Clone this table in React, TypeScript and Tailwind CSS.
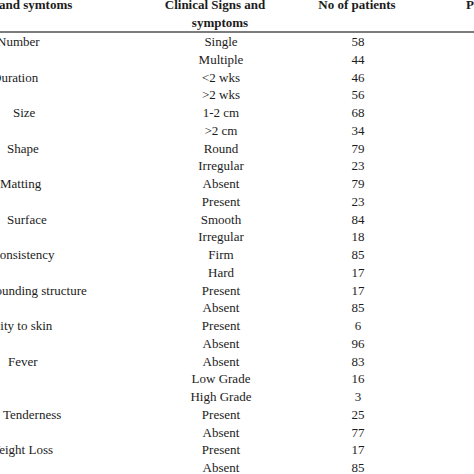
import React from "react";

type Row = { label?: string; off?: string; sign: string; n: string };

const rows: Row[] = [
  { label: "Number", off: "-ml-[3px]", sign: "Single", n: "58" },
  { sign: "Multiple", n: "44" },
  { label: "Duration", off: "-ml-[8px]", sign: "<2 wks", n: "46" },
  { sign: ">2 wks", n: "56" },
  { label: "Size", off: "ml-[13px]", sign: "1-2 cm", n: "68" },
  { sign: ">2 cm", n: "34" },
  { label: "Shape", off: "ml-[7px]", sign: "Round", n: "79" },
  { sign: "Irregular", n: "23" },
  { label: "Matting", off: "ml-[0px]", sign: "Absent", n: "79" },
  { sign: "Present", n: "23" },
  { label: "Surface", off: "ml-[7px]", sign: "Smooth", n: "84" },
  { sign: "Irregular", n: "18" },
  { label: "Consistency", off: "-ml-[9px]", sign: "Firm", n: "85" },
  { sign: "Hard", n: "17" },
  { label: "Surrounding structure", off: "-ml-[27px]", sign: "Present", n: "17" },
  { sign: "Absent", n: "85" },
  { label: "Fixity to skin", off: "-ml-[17px]", sign: "Present", n: "6" },
  { sign: "Absent", n: "96" },
  { label: "Fever", off: "ml-[8px]", sign: "Absent", n: "83" },
  { sign: "Low Grade", n: "16" },
  { sign: "High Grade", n: "3" },
  { label: "Tenderness", off: "ml-[3px]", sign: "Present", n: "25" },
  { sign: "Absent", n: "77" },
  { label: "Weight Loss", off: "-ml-[12px]", sign: "Present", n: "17" },
  { sign: "Absent", n: "85" },
];

export default function App() {
  return (
    <div
      className="w-[474px] h-[474px] overflow-hidden bg-white text-[#1c1c1c] text-[13px]"
      style={{ fontFamily: '"Liberation Serif", "Times New Roman", serif' }}
    >
      <div className="-mt-[4px] flex flex-col">
        {/* header */}
        <div className="flex font-bold leading-[17.5px]">
          <div className="w-[150px] shrink-0 whitespace-nowrap -ml-[1px]">and symtoms</div>
          <div className="w-[142px] shrink-0 flex flex-col items-center">
            <span className="whitespace-nowrap pr-[10px]">Clinical Signs and</span>
            <span className="whitespace-nowrap">symptoms</span>
          </div>
          <div className="w-[132px] shrink-0 text-center whitespace-nowrap">No of patients</div>
          <div className="pl-[43px] whitespace-nowrap">P value</div>
        </div>
        <div className="h-[2px] bg-[#7c7c7c]" />
        {/* body */}
        {rows.map((r, i) => (
          <div key={i} className="flex h-[17.75px] leading-[17.75px]">
            <div className="w-[150px] shrink-0 whitespace-nowrap">
              {r.label ? <span className={`inline-block ${r.off}`}>{r.label}</span> : null}
            </div>
            <div className="w-[142px] shrink-0 text-center whitespace-nowrap">{r.sign}</div>
            <div className="w-[132px] shrink-0 text-center whitespace-nowrap">{r.n}</div>
            <div className="flex-1" />
          </div>
        ))}
      </div>
    </div>
  );
}
